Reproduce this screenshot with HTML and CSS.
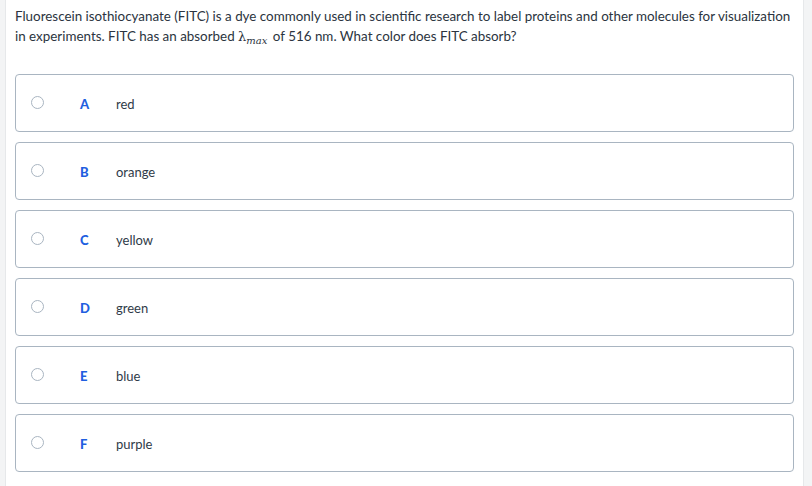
FILE: index.html
```html
<!DOCTYPE html>
<html>
<head>
<meta charset="utf-8">
<link rel="stylesheet" href="styles.css">
</head>
<body>
<div class="page">
  <p class="question">Fluorescein isothiocyanate (FITC) is a dye commonly used in scientific research to label proteins and other molecules for visualization in experiments. FITC has an absorbed <span class="math">λ<span class="sub">max</span></span> of 516 nm. What color does FITC absorb?</p>
  <div class="options">
    <div class="option"><span class="radio"></span><span class="letter">A</span><span class="text">red</span></div>
    <div class="option"><span class="radio"></span><span class="letter">B</span><span class="text">orange</span></div>
    <div class="option"><span class="radio"></span><span class="letter">C</span><span class="text">yellow</span></div>
    <div class="option"><span class="radio"></span><span class="letter">D</span><span class="text">green</span></div>
    <div class="option"><span class="radio"></span><span class="letter">E</span><span class="text">blue</span></div>
    <div class="option"><span class="radio"></span><span class="letter">F</span><span class="text">purple</span></div>
  </div>
</div>
</body>
</html>
```
FILE: styles.css
```css
html, body {
  margin: 0;
  padding: 0;
  background: #f3f4f5;
}
.page {
  margin-left: 5px;
  width: 799px;
  height: 486px;
  background: #ffffff;
  border-left: 1px solid #e6e8ea;
  border-right: 1px solid #e6e8ea;
  box-sizing: border-box;
  padding: 0 9px;
  font-family: Lato, "Open Sans", sans-serif;
  color: #2f3b48;
  overflow: hidden;
}
.question {
  margin: 0;
  padding-top: 6px;
  font-size: 13.4px;
  line-height: 20px;
  color: #2b3440;
}
.math {
  font-family: "DejaVu Serif", serif;
  font-size: 13px;
  margin-right: 2px;
}
.math .sub {
  display: inline-block;
  font-style: italic;
  font-size: 10px;
  position: relative;
  top: 3px;
  line-height: 10px;
}
.options {
  margin-top: 27px;
  display: flex;
  flex-direction: column;
  gap: 10px;
}
.option {
  height: 58px;
  box-sizing: border-box;
  border: 1px solid #a9b5c1;
  border-radius: 4px;
  display: flex;
  align-items: center;
  padding-top: 2px;
}
.radio {
  width: 11px;
  height: 11px;
  border: 1.5px solid #a9b5c1;
  border-radius: 50%;
  margin-left: 15px;
  margin-top: -3px;
  flex: none;
}
.letter {
  margin-left: 36px;
  width: 36px;
  font-weight: 900;
  font-size: 13px;
  color: #1f5fe0;
}
.text {
  font-size: 13px;
  color: #2f3b48;
}
```
